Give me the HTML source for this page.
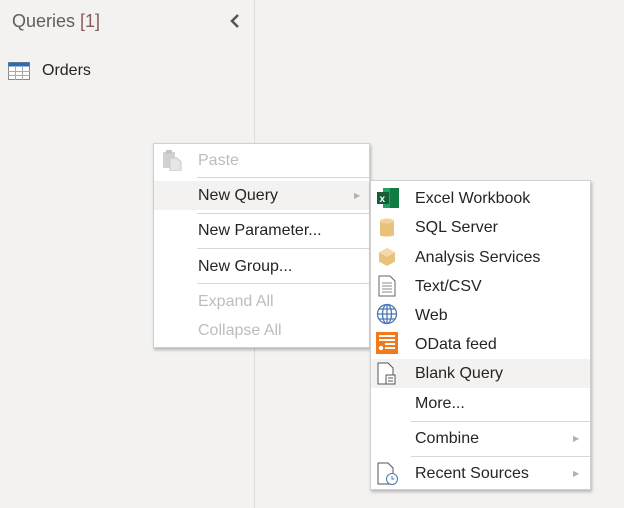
<!DOCTYPE html>
<html><head><style>
body{margin:0;width:624px;height:508px;background:#f3f2f1;position:relative;overflow:hidden;font-family:"Liberation Sans",sans-serif;color:#252423}
.abs{position:absolute}
.menu{position:absolute;background:#fff;border:1px solid #d0d0d0;box-shadow:1px 2px 3px rgba(0,0,0,.25)}
.it{position:absolute;left:0;right:0;height:29px;line-height:29px;font-size:16px}
.sep{position:absolute;height:1px;background:#d6d6d6}
.dis{color:#bdbdbd}
.arr{position:absolute;font-size:8px;color:#b0b0b0}
</style></head><body>
<div class="abs" style="left:254px;top:0;width:1px;height:508px;background:#dcdcdc"></div>
<div class="abs" style="left:12px;top:11px;font-size:18px;color:#605e5c">Queries <span style="color:#8a5a5a">[1]</span></div>
<svg class="abs" style="left:229px;top:13px" width="12" height="16"><path d="M9 2L3 8l6 6" stroke="#555" stroke-width="2.5" fill="none"/></svg>
<svg class="abs" style="left:8px;top:62px" width="22" height="18"><rect x="0.5" y="0.5" width="21" height="17" fill="#fff" stroke="#888"/><rect x="0.5" y="0.5" width="21" height="4" fill="#2b6cb0"/><path d="M7.5 5v13M14.5 5v13M0 9.5h22M0 13.5h22" stroke="#aaa"/></svg>
<div class="abs" style="left:42px;top:62px;font-size:16px">Orders</div>

<div class="menu" style="left:153px;top:143px;width:215px;height:203px">
 <svg class="abs" style="left:8px;top:5px" width="20" height="22"><rect x="1" y="3" width="12" height="16" fill="#d2d2d2"/><rect x="4" y="1" width="6" height="4" fill="#c4c4c4"/><path d="M8 9h7l4 4v9H8z" fill="#e6e6e6" stroke="#c8c8c8"/></svg>
 <div class="it dis" style="top:2px;left:44px">Paste</div>
 <div class="sep" style="left:43px;right:0;top:33px"></div>
 <div class="it" style="top:37px;background:#f3f2f1;padding-left:44px;left:0;right:0">New Query</div>
 <div class="arr" style="left:200px;top:47px">▶</div>
 <div class="sep" style="left:43px;right:0;top:69px"></div>
 <div class="it" style="top:72px;left:44px">New Parameter...</div>
 <div class="sep" style="left:43px;right:0;top:104px"></div>
 <div class="it" style="top:108px;left:44px">New Group...</div>
 <div class="sep" style="left:43px;right:0;top:139px"></div>
 <div class="it dis" style="top:143px;left:44px">Expand All</div>
 <div class="it dis" style="top:172px;left:44px">Collapse All</div>
</div>

<div class="menu" style="left:370px;top:180px;width:219px;height:308px">
 <svg class="abs" style="left:5px;top:6px" width="24" height="22"><rect x="7" y="1" width="16" height="20" fill="#21a366"/><rect x="14" y="1" width="9" height="20" fill="#107c41"/><rect x="1" y="5" width="12" height="12" fill="#185c37"/><text x="3.5" y="15" font-size="10" fill="#fff" font-family="Liberation Sans" font-weight="bold">x</text></svg>
 <div class="it" style="top:3px;left:44px">Excel Workbook</div>
 <svg class="abs" style="left:8px;top:37px" width="16" height="20"><path d="M1 3v14c0 2 14 2 14 0V3z" fill="#e8c27a"/><ellipse cx="8" cy="3" rx="7" ry="2.5" fill="#f0d49c"/></svg>
 <div class="it" style="top:32px;left:44px">SQL Server</div>
 <svg class="abs" style="left:6px;top:66px" width="20" height="20"><path d="M10 1l8 4.5v9L10 19l-8-4.5v-9z" fill="#e8c27a"/><path d="M2 5.5l8 4.5 8-4.5-8-4.5z" fill="#f3d9a6"/></svg>
 <div class="it" style="top:62px;left:44px">Analysis Services</div>
 <svg class="abs" style="left:7px;top:94px" width="18" height="22"><path d="M1 1h11l5 5v15H1z" fill="#fff" stroke="#666"/><path d="M4 8h10M4 11h10M4 14h10M4 17h10" stroke="#888"/></svg>
 <div class="it" style="top:91px;left:44px">Text/CSV</div>
 <svg class="abs" style="left:5px;top:122px" width="22" height="22"><g fill="none" stroke="#4a78b0" stroke-width="1.3"><circle cx="11" cy="11" r="9.5"/><ellipse cx="11" cy="11" rx="4.5" ry="9.5"/><path d="M1.5 11h19M3 6h16M3 16h16M11 1.5v19"/></g></svg>
 <div class="it" style="top:120px;left:44px">Web</div>
 <svg class="abs" style="left:5px;top:151px" width="22" height="22"><rect width="22" height="22" fill="#f27a1a"/><path d="M3 4h16M3 8h16M9 12h10M9 16h10" stroke="#fff" stroke-width="2"/><circle cx="5" cy="16" r="2.2" fill="#fff"/></svg>
 <div class="it" style="top:149px;left:44px">OData feed</div>
 <div class="it" style="top:178px;background:#f3f2f1"></div>
 <svg class="abs" style="left:6px;top:181px" width="20" height="24"><path d="M1 1h10l5 5v16H1z" fill="#fff" stroke="#555"/><rect x="9" y="13" width="9" height="9" fill="#fff" stroke="#555"/><path d="M11 16h5M11 19h5" stroke="#555"/></svg>
 <div class="it" style="top:178px;left:44px">Blank Query</div>
 <div class="it" style="top:208px;left:44px">More...</div>
 <div class="sep" style="left:40px;right:0;top:240px"></div>
 <div class="it" style="top:243px;left:44px">Combine</div>
 <div class="arr" style="left:202px;top:253px">▶</div>
 <div class="sep" style="left:40px;right:0;top:275px"></div>
 <svg class="abs" style="left:6px;top:281px" width="22" height="24"><path d="M1 1h10l5 5v16H1z" fill="#fff" stroke="#555"/><circle cx="15" cy="17" r="5.5" fill="#fff" stroke="#4a78b0"/><path d="M15 14v3h2.5" stroke="#4a78b0" fill="none"/></svg>
 <div class="it" style="top:278px;left:44px">Recent Sources</div>
 <div class="arr" style="left:202px;top:288px">▶</div>
</div>
</body></html>
